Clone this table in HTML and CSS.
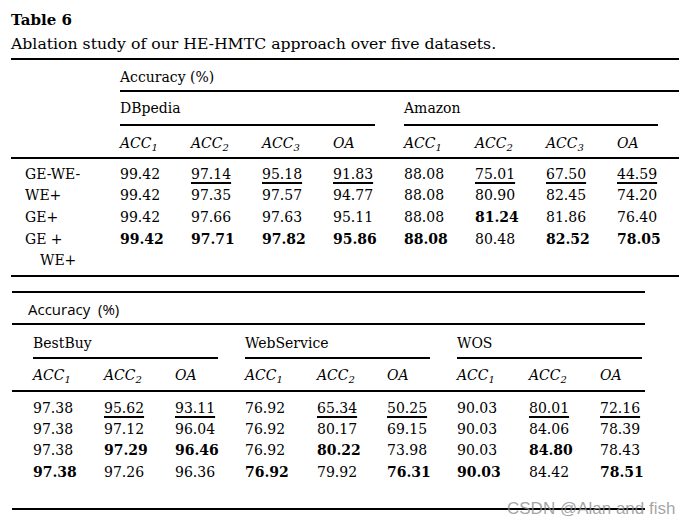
FILE: index.html
```html
<!DOCTYPE html>
<html>
<head>
<meta charset="utf-8">
<link rel="stylesheet" href="styles.css">
</head>
<body>
<div class="page">
  <div class="title">Table 6</div>
  <div class="caption">Ablation study of our HE-HMTC approach over five datasets.</div>

  <table class="t1">
    <colgroup>
      <col class="w109"><col class="w71"><col class="w71"><col class="w71"><col class="w71"><col class="w71"><col class="w71"><col class="w71"><col class="w62">
    </colgroup>
    <thead>
      <tr class="acc-row">
        <th></th>
        <th colspan="8" class="acc">Accuracy (%)</th>
      </tr>
      <tr class="grp-row">
        <th></th>
        <th colspan="4"><div class="grp r29">DBpedia</div></th>
        <th colspan="4"><div class="grp r21">Amazon</div></th>
      </tr>
      <tr class="hdr-row">
        <th></th>
        <th><i>ACC<sub>1</sub></i></th>
        <th><i>ACC<sub>2</sub></i></th>
        <th><i>ACC<sub>3</sub></i></th>
        <th><i>OA</i></th>
        <th><i>ACC<sub>1</sub></i></th>
        <th><i>ACC<sub>2</sub></i></th>
        <th><i>ACC<sub>3</sub></i></th>
        <th><i>OA</i></th>
      </tr>
    </thead>
    <tbody>
      <tr class="first">
        <td class="lbl">GE-WE-</td>
        <td>99.42</td><td><u>97.14</u></td><td><u>95.18</u></td><td><u>91.83</u></td>
        <td>88.08</td><td><u>75.01</u></td><td><u>67.50</u></td><td><u>44.59</u></td>
      </tr>
      <tr>
        <td class="lbl">WE+</td>
        <td>99.42</td><td>97.35</td><td>97.57</td><td>94.77</td>
        <td>88.08</td><td>80.90</td><td>82.45</td><td>74.20</td>
      </tr>
      <tr>
        <td class="lbl">GE+</td>
        <td>99.42</td><td>97.66</td><td>97.63</td><td>95.11</td>
        <td>88.08</td><td><b>81.24</b></td><td>81.86</td><td>76.40</td>
      </tr>
      <tr class="last">
        <td class="lbl hang">GE +<br>WE+</td>
        <td><b>99.42</b></td><td><b>97.71</b></td><td><b>97.82</b></td><td><b>95.86</b></td>
        <td><b>88.08</b></td><td>80.48</td><td><b>82.52</b></td><td><b>78.05</b></td>
      </tr>
    </tbody>
  </table>

  <table class="t2">
    <colgroup>
      <col class="w92"><col class="w71"><col class="w70"><col class="w72"><col class="w70"><col class="w70"><col class="w72"><col class="w71"><col class="w45">
    </colgroup>
    <thead>
      <tr class="acc-row">
        <th colspan="9" class="acc sans">Accuracy&nbsp; (%)</th>
      </tr>
      <tr class="grp-row2">
        <th colspan="3"><div class="grp l21 r27">BestBuy</div></th>
        <th colspan="3"><div class="grp r27">WebService</div></th>
        <th colspan="3"><div class="grp r3">WOS</div></th>
      </tr>
      <tr class="hdr-row2">
        <th class="pl21"><i>ACC<sub>1</sub></i></th>
        <th><i>ACC<sub>2</sub></i></th>
        <th><i>OA</i></th>
        <th><i>ACC<sub>1</sub></i></th>
        <th><i>ACC<sub>2</sub></i></th>
        <th><i>OA</i></th>
        <th><i>ACC<sub>1</sub></i></th>
        <th><i>ACC<sub>2</sub></i></th>
        <th><i>OA</i></th>
      </tr>
    </thead>
    <tbody>
      <tr class="first">
        <td class="pl21">97.38</td><td><u>95.62</u></td><td><u>93.11</u></td>
        <td>76.92</td><td><u>65.34</u></td><td><u>50.25</u></td>
        <td>90.03</td><td><u>80.01</u></td><td><u>72.16</u></td>
      </tr>
      <tr>
        <td class="pl21">97.38</td><td>97.12</td><td>96.04</td>
        <td>76.92</td><td>80.17</td><td>69.15</td>
        <td>90.03</td><td>84.06</td><td>78.39</td>
      </tr>
      <tr>
        <td class="pl21">97.38</td><td><b>97.29</b></td><td><b>96.46</b></td>
        <td>76.92</td><td><b>80.22</b></td><td>73.98</td>
        <td>90.03</td><td><b>84.80</b></td><td>78.43</td>
      </tr>
      <tr class="last">
        <td class="pl21"><b>97.38</b></td><td>97.26</td><td>96.36</td>
        <td><b>76.92</b></td><td>79.92</td><td><b>76.31</b></td>
        <td><b>90.03</b></td><td>84.42</td><td><b>78.51</b></td>
      </tr>
    </tbody>
  </table>

  <div class="watermark">CSDN @Alan and fish</div>
</div>
</body>
</html>
```

FILE: styles.css
```css
html, body {
  margin: 0;
  padding: 0;
  background: #fff;
}

body {
  width: 700px;
  height: 525px;
  overflow: hidden;
  color: #000;
  font-family: "DejaVu Serif", serif;
}

.page {
  position: relative;
  height: 525px;
  padding-left: 11px;
}

.title {
  font-weight: bold;
  font-size: 15px;
  line-height: 20px;
  padding-top: 10px;
}

.caption {
  font-size: 15.7px;
  line-height: 22px;
  margin-top: 2.5px;
}

table {
  border-collapse: separate;
  border-spacing: 0;
  table-layout: fixed;
  font-size: 14px;
}

th, td {
  padding: 0;
  text-align: left;
  font-weight: normal;
  vertical-align: top;
  white-space: nowrap;
}

col.w109 { width: 109px; }
col.w92 { width: 92px; }
col.w72 { width: 72px; }
col.w71 { width: 71px; }
col.w70 { width: 70px; }
col.w62 { width: 62px; }
col.w45 { width: 45px; }

.t1 {
  width: 668px;
  margin-top: 3.5px;
  border-top: 2px solid #000;
  border-bottom: 2px solid #000;
}

.t2 {
  width: 633px;
  margin-left: 1px;
  margin-top: 14px;
  border-top: 2px solid #000;
  border-bottom: 2px solid #000;
}

.acc-row th {
  padding-top: 7px;
  padding-bottom: 3px;
  line-height: 20px;
}

.acc {
  border-bottom: 2px solid #000;
}

.sans {
  font-family: "Open Sans", sans-serif;
  font-size: 15px;
  padding-left: 16px;
}

.t2 .acc-row th {
  padding-top: 6px;
  padding-bottom: 4px;
}

.grp {
  line-height: 20px;
  padding: 6px 0;
  border-bottom: 2px solid #000;
}

.grp-row2 .grp {
  padding: 8px 0 4px;
}

.r29 { margin-right: 29px; }
.r21 { margin-right: 21px; }
.r27 { margin-right: 27px; }
.r3 { margin-right: 3px; }
.l21 { margin-left: 21px; }
.pl21 { padding-left: 21px; }

.hdr-row th {
  line-height: 20px;
  padding-top: 7px;
  padding-bottom: 4px;
  border-bottom: 2px solid #000;
}

.hdr-row2 th {
  line-height: 20px;
  padding-top: 6px;
  padding-bottom: 5px;
  border-bottom: 2px solid #000;
}

sub {
  font-size: 10px;
  vertical-align: -3px;
  line-height: 0;
}

.t1 td {
  line-height: 21.7px;
}

.t1 tr.first td { padding-top: 4.5px; }
.t1 tr.last td { padding-bottom: 3px; }

.t2 td {
  line-height: 21.3px;
}

.t2 tr.first td { padding-top: 5.8px; }
.t2 tr.last td { padding-bottom: 25px; }

.lbl {
  padding-left: 14px;
}

.t1 td.hang {
  white-space: normal;
  padding-left: 29px;
  text-indent: -15px;
}

u {
  text-decoration: underline;
  text-decoration-thickness: 2px;
  text-underline-offset: 3px;
}

b {
  font-weight: bold;
}

.watermark {
  position: absolute;
  left: 507px;
  top: 500px;
  font-family: "Liberation Sans", Arial, sans-serif;
  font-size: 17px;
  line-height: 17px;
  color: rgba(140, 140, 140, 0.8);
  white-space: nowrap;
}
```
